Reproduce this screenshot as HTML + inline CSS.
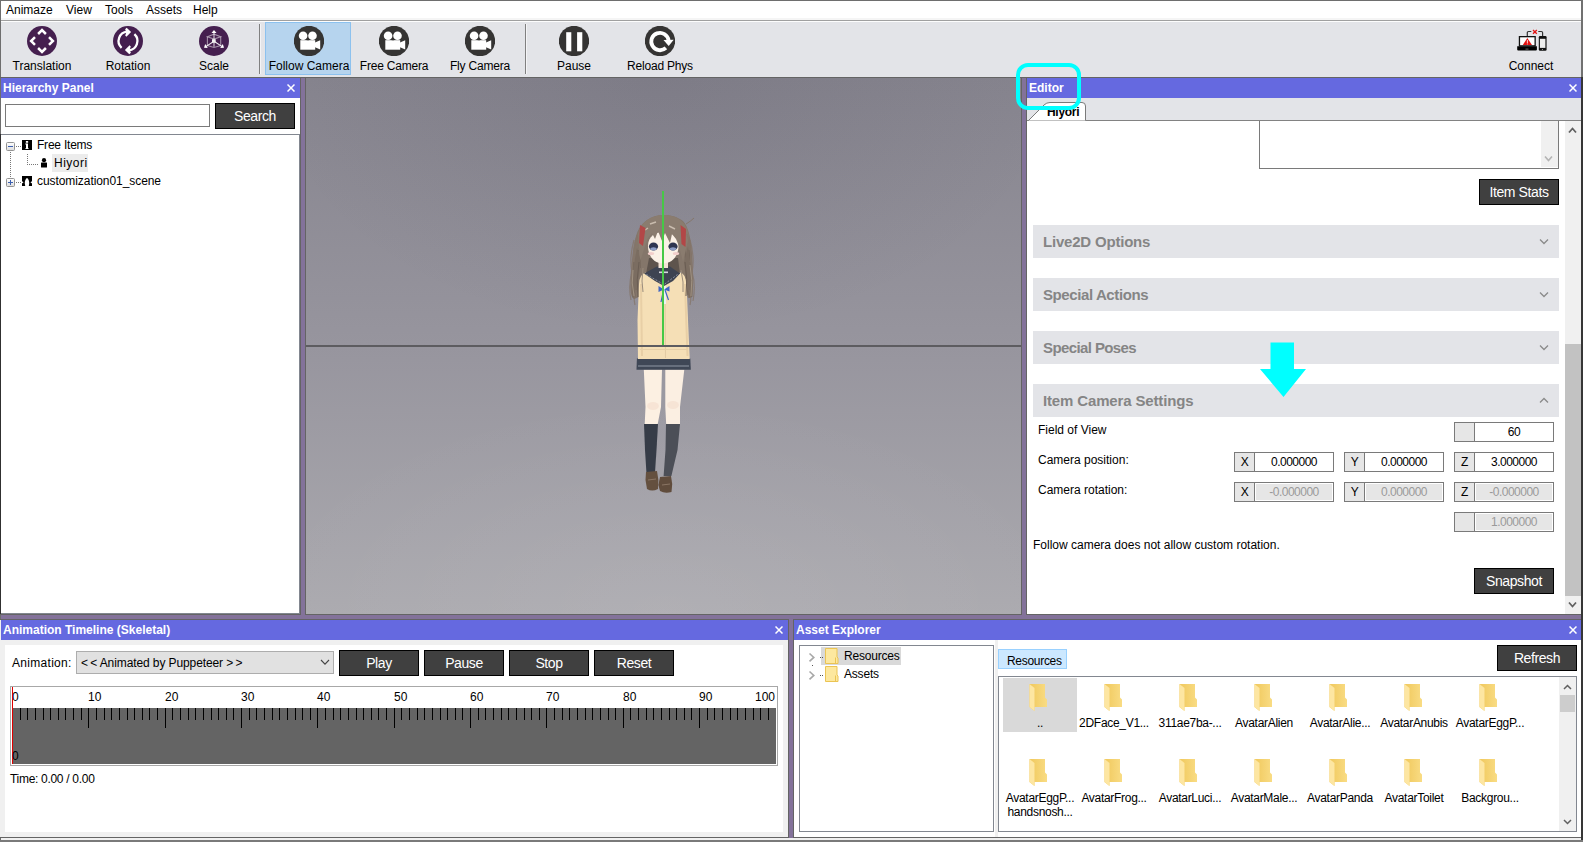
<!DOCTYPE html>
<html><head><meta charset="utf-8">
<style>
*{margin:0;padding:0;box-sizing:border-box}
html,body{width:1583px;height:842px;overflow:hidden;background:#f0f0f0;font-family:"Liberation Sans",sans-serif;font-size:12px;color:#000}
.a{position:absolute}
.t{position:absolute;white-space:nowrap;line-height:1}
.hdr{position:absolute;background:#6569e0;height:20px}
.hdr .ht{position:absolute;left:2px;top:4px;color:#fff;font-weight:bold;font-size:12px;line-height:12px;white-space:nowrap}
.hdr .x{position:absolute;top:6px;width:8px;height:8px}
.btn{position:absolute;background:#404040;border:1px solid #000;color:#fff;font-size:14px;letter-spacing:-0.4px;text-align:center;white-space:nowrap}
.tb{position:absolute;top:22px;height:53px;width:86px;text-align:center}
.tb svg{position:absolute;left:27px;top:3px}
.tb .l{position:absolute;left:0;right:0;top:39px;font-size:12px;line-height:14px;text-align:center;white-space:nowrap}
</style></head><body>
<svg width="0" height="0" style="position:absolute"><defs><linearGradient id="fg" x1="0" y1="0" x2="1" y2="0"><stop offset="0" stop-color="#f0c85e"/><stop offset="0.35" stop-color="#f3cf6a"/><stop offset="1" stop-color="#f9dc84"/></linearGradient></defs></svg>
<!-- window border -->
<div class="a" style="left:0;top:0;width:1583px;height:1px;background:#6e6e6e"></div>
<div class="a" style="left:0;top:0;width:1px;height:842px;background:#6e6e6e"></div>
<div class="a" style="left:1581px;top:0;width:2px;height:77px;background:#717171"></div><div class="a" style="left:1581px;top:77px;width:2px;height:765px;background:#363636"></div>
<!-- menu -->
<div class="a" style="left:1px;top:1px;width:1580px;height:17px;background:#fff"></div>
<div class="a" style="left:1px;top:18px;width:1580px;height:2px;background:#f5f5f5"></div>
<div class="a" style="left:1px;top:20px;width:1580px;height:1px;background:#a0a0a0"></div>
<div class="a" style="left:1px;top:21px;width:1580px;height:1px;background:#fdfdfd"></div>
<div class="t" style="left:6px;top:4px">Animaze</div>
<div class="t" style="left:66px;top:4px">View</div>
<div class="t" style="left:105px;top:4px">Tools</div>
<div class="t" style="left:146px;top:4px">Assets</div>
<div class="t" style="left:193px;top:4px">Help</div>
<!-- toolbar -->
<div class="a" style="left:1px;top:22px;width:1580px;height:55px;background:#e3e4e8"></div>
<div class="a" style="left:0;top:77px;width:1581px;height:1px;background:#646464"></div>


<!-- toolbar buttons -->
<div class="a" style="left:265px;top:22px;width:86px;height:53px;background:#b6d4ee;border:1px solid #8cc1ee"></div>
<div class="a" style="left:259px;top:24px;width:1px;height:50px;background:#808080"></div>
<div class="a" style="left:260px;top:24px;width:1px;height:50px;background:#f4f4f6"></div>
<div class="a" style="left:525px;top:24px;width:1px;height:50px;background:#808080"></div>
<div class="a" style="left:526px;top:24px;width:1px;height:50px;background:#f4f4f6"></div>

<svg class="a" style="left:27px;top:26px" width="30" height="30" viewBox="0 0 30 30"><circle cx="15" cy="15" r="15" fill="#451f4f"/><g fill="none" stroke="#fff" stroke-width="2.5" stroke-linejoin="miter"><polyline points="11.1,8 15,4.1 18.9,8"/><polyline points="11.1,22 15,25.9 18.9,22"/><polyline points="8,11.1 4.1,15 8,18.9"/><polyline points="22,11.1 25.9,15 22,18.9"/></g></svg>
<div class="t" style="left:0;width:84px;text-align:center;top:60px">Translation</div>

<svg class="a" style="left:113px;top:26px" width="30" height="30" viewBox="0 0 30 30"><circle cx="15" cy="15" r="15" fill="#451f4f"/><g fill="none" stroke="#fff" stroke-width="2.3"><path d="M8.6 21.8 A9.3 9.3 0 0 1 14.2 5.7"/><path d="M21.4 8.2 A9.3 9.3 0 0 1 15.8 24.3"/></g><g fill="#fff"><polygon points="12.1,3.3 13.7,1.7 18.1,6.1 13.4,10.8 12.2,9.6 13.4,6.2"/><polygon points="17.9,26.7 16.3,28.3 11.9,23.9 16.6,19.2 17.8,20.4 16.6,23.8"/></g></svg>
<div class="t" style="left:86px;width:84px;text-align:center;top:60px">Rotation</div>

<svg class="a" style="left:199px;top:26px" width="30" height="30" viewBox="0 0 30 30"><circle cx="15" cy="15" r="15" fill="#451f4f"/><g fill="none" stroke="#fff" stroke-opacity="0.5" stroke-width="1.1"><path d="M8.4 10.7 L15 8.2 L21.7 10.7 L15 13.1 Z"/><path d="M8.4 10.7 V19.6 L15 21.5 L21.7 19.6 V10.7"/></g><rect x="14.3" y="6.8" width="1.4" height="14" fill="#fff" fill-opacity="0.6"/><g stroke="#fff" stroke-width="1.1" stroke-opacity="0.9"><line x1="15" y1="15.3" x2="7.2" y2="20.4"/><line x1="15" y1="15.3" x2="22.8" y2="20.4"/></g><g fill="#fff"><polygon points="15,3.9 17.5,6.9 12.5,6.9"/><rect x="13" y="13.2" width="3.7" height="3.5" fill="#f0f0f0"/><polygon points="6.2,18 5,21.8 8.8,22"/><polygon points="23.8,18 25,21.8 21.2,22"/></g></svg>
<div class="t" style="left:171px;width:86px;text-align:center;top:60px">Scale</div>
<svg class="a" style="left:294px;top:26px" width="30" height="30" viewBox="0 0 30 30"><circle cx="15" cy="15" r="15.2" fill="#353433"/><g fill="#fff"><circle cx="9.1" cy="9.8" r="4.3"/><circle cx="18.5" cy="9.8" r="4.3"/><rect x="6.3" y="14.2" width="14.9" height="9.5"/><polygon points="21,16.6 26.2,14.2 26.2,23.6 21,21.3"/></g><polygon points="12.6,14.3 13.85,12.6 15.1,14.3" fill="#353433"/></svg>
<div class="t" style="left:259px;width:100px;text-align:center;top:60px">Follow Camera</div>
<svg class="a" style="left:379px;top:26px" width="30" height="30" viewBox="0 0 30 30"><circle cx="15" cy="15" r="15.2" fill="#353433"/><g fill="#fff"><circle cx="9.1" cy="9.8" r="4.3"/><circle cx="18.5" cy="9.8" r="4.3"/><rect x="6.3" y="14.2" width="14.9" height="9.5"/><polygon points="21,16.6 26.2,14.2 26.2,23.6 21,21.3"/></g><polygon points="12.6,14.3 13.85,12.6 15.1,14.3" fill="#353433"/></svg>
<div class="t" style="left:344px;width:100px;text-align:center;top:60px;letter-spacing:-0.2px">Free Camera</div>
<svg class="a" style="left:465px;top:26px" width="30" height="30" viewBox="0 0 30 30"><circle cx="15" cy="15" r="15.2" fill="#353433"/><g fill="#fff"><circle cx="9.1" cy="9.8" r="4.3"/><circle cx="18.5" cy="9.8" r="4.3"/><rect x="6.3" y="14.2" width="14.9" height="9.5"/><polygon points="21,16.6 26.2,14.2 26.2,23.6 21,21.3"/></g><polygon points="12.6,14.3 13.85,12.6 15.1,14.3" fill="#353433"/></svg>
<div class="t" style="left:430px;width:100px;text-align:center;top:60px;letter-spacing:-0.2px">Fly Camera</div>

<svg class="a" style="left:559px;top:26px" width="30" height="30" viewBox="0 0 30 30"><circle cx="15" cy="15" r="15.2" fill="#353433"/><g fill="#fff"><rect x="7.2" y="6.2" width="5.1" height="19.1"/><rect x="18.1" y="6.2" width="5.2" height="19.1"/></g></svg>
<div class="t" style="left:524px;width:100px;text-align:center;top:60px">Pause</div>
<svg class="a" style="left:645px;top:26px" width="30" height="30" viewBox="0 0 30 30"><circle cx="15" cy="15" r="15.2" fill="#353433"/><path d="M23.57 14.2 A8.7 8.7 0 1 0 20.9 21.9" fill="none" stroke="#fff" stroke-width="3.8"/><polygon points="18.5,13.9 28.7,13.7 23.7,20.1" fill="#fff"/></svg>
<div class="t" style="left:610px;width:100px;text-align:center;top:60px;letter-spacing:-0.2px">Reload Phys</div>

<svg class="a" style="left:1512px;top:26px" width="40" height="28" viewBox="0 0 40 28"><rect x="7.45" y="10.65" width="15.7" height="9.2" fill="#fff" stroke="#111" stroke-width="1.3"/><path d="M5.2 20.3 H24.9 V23.6 Q24.9 24.6 23.9 24.6 H6.2 Q5.2 24.6 5.2 23.6 Z" fill="#000"/><rect x="13.5" y="22.6" width="3" height="1" fill="#666"/><polygon points="15.3,12 10.8,19 20,19" fill="#e31212"/><rect x="14.9" y="14" width="0.8" height="3.2" fill="#fff"/><rect x="14.9" y="17.6" width="0.8" height="0.8" fill="#fff"/><rect x="26.8" y="10" width="7.8" height="14.8" rx="1.2" fill="#111"/><rect x="27.9" y="12.8" width="5.5" height="9.1" fill="#eee"/><circle cx="30.4" cy="23.5" r="0.5" fill="#ccc"/><path d="M15.3 10 V6.7 Q15.3 5.5 16.5 5.5 H19.3 M26.3 5.5 H29.4 Q30.6 5.5 30.6 6.7 V10" fill="none" stroke="#333" stroke-width="1.2"/><path d="M21 4 L24.8 7.8 M24.8 4 L21 7.8" stroke="#e31212" stroke-width="1.3"/></svg>
<div class="t" style="left:1481px;width:100px;text-align:center;top:60px">Connect</div>

<!-- splitter background -->
<div class="a" style="left:1px;top:78px;width:1580px;height:760px;background:#83729a"></div>

<!-- hierarchy panel -->
<div class="a" style="left:1px;top:78px;width:299px;height:536px;background:#fff"></div>
<div class="a" style="left:300px;top:77px;width:1px;height:538px;background:#646464"></div>
<div class="a" style="left:0;top:614px;width:301px;height:1px;background:#646464"></div>
<div class="hdr" style="left:1px;top:78px;width:299px"><div class="ht">Hierarchy Panel</div></div>


<!-- hierarchy content -->
<div class="a" style="left:5px;top:104px;width:205px;height:23px;border:1px solid #7a7a7a;background:#fff"></div>
<div class="btn" style="left:215px;top:103px;width:80px;height:26px;line-height:24px">Search</div>
<div class="a" style="left:1px;top:134px;width:299px;height:1px;background:#828790"></div>
<div class="a" style="left:299px;top:134px;width:1px;height:480px;background:#828790"></div>
<div class="a" style="left:0;top:134px;width:1px;height:480px;background:#303030"></div>
<div class="a" style="left:1px;top:613px;width:299px;height:1px;background:#828790"></div>
<svg class="a" style="left:0;top:135px" width="60" height="55" viewBox="0 135 60 55">
 <defs><linearGradient id="eg" x1="0" y1="0" x2="0" y2="1"><stop offset="0" stop-color="#fff"/><stop offset="1" stop-color="#dcdcdc"/></linearGradient></defs>
 <rect x="6.5" y="142.5" width="8" height="8" rx="1" fill="url(#eg)" stroke="#939393"/>
 <rect x="8" y="146" width="5" height="1" fill="#3b5fb0"/>
 <rect x="6.5" y="178.5" width="8" height="8" rx="1" fill="url(#eg)" stroke="#939393"/>
 <rect x="8" y="182" width="5" height="1" fill="#3b5fb0"/><rect x="10" y="180" width="1" height="5" fill="#3b5fb0"/>
 <g fill="#777">
  <rect x="16" y="146" width="1" height="1"/><rect x="18" y="146" width="1" height="1"/><rect x="20" y="146" width="1" height="1"/>
  <rect x="16" y="182" width="1" height="1"/><rect x="18" y="182" width="1" height="1"/><rect x="20" y="182" width="1" height="1"/>
  <rect x="10" y="152" width="1" height="1"/><rect x="10" y="154" width="1" height="1"/><rect x="10" y="156" width="1" height="1"/><rect x="10" y="158" width="1" height="1"/><rect x="10" y="160" width="1" height="1"/><rect x="10" y="162" width="1" height="1"/><rect x="10" y="164" width="1" height="1"/><rect x="10" y="166" width="1" height="1"/><rect x="10" y="168" width="1" height="1"/><rect x="10" y="170" width="1" height="1"/><rect x="10" y="172" width="1" height="1"/><rect x="10" y="174" width="1" height="1"/><rect x="10" y="176" width="1" height="1"/>
  <rect x="27" y="154" width="1" height="1"/><rect x="27" y="156" width="1" height="1"/><rect x="27" y="158" width="1" height="1"/><rect x="27" y="160" width="1" height="1"/><rect x="27" y="162" width="1" height="1"/><rect x="27" y="164" width="1" height="1"/>
  <rect x="29" y="164" width="1" height="1"/><rect x="31" y="164" width="1" height="1"/><rect x="33" y="164" width="1" height="1"/><rect x="35" y="164" width="1" height="1"/><rect x="37" y="164" width="1" height="1"/>
 </g>
 <rect x="22" y="140" width="10" height="10" fill="#000"/>
 <rect x="25.8" y="141" width="2.4" height="1.8" rx="0.6" fill="#fff"/><rect x="26" y="143.5" width="2" height="5" fill="#fff"/><rect x="25.3" y="143.5" width="1" height="1" fill="#fff"/><rect x="25.5" y="148" width="3" height="1" fill="#fff"/>
 <circle cx="44" cy="160.2" r="2.1" fill="#000"/><rect x="41" y="162.6" width="6" height="5" rx="0.5" fill="#000"/>
 <rect x="22" y="176" width="10" height="10" fill="#000"/>
 <path d="M25.2 186 Q24.3 183 25 181 Q26 178.2 27 178 Q28 178.2 29 181 Q29.7 183 28.8 186 Z" fill="#fff"/><path d="M22 181.2 L23.6 182.2 L22 183.4 Z M32 181.2 L30.4 182.2 L32 183.4 Z" fill="#fff"/>
</svg>
<div class="t" style="left:37px;top:139px;letter-spacing:-0.22px">Free Items</div>
<div class="a" style="left:52px;top:154px;width:36px;height:18px;background:#ececec"></div>
<div class="t" style="left:54px;top:157px;letter-spacing:0.5px">Hiyori</div>
<div class="t" style="left:37px;top:175px;letter-spacing:-0.07px">customization01_scene</div>
<svg class="a" style="left:287px;top:84px" width="8" height="8" viewBox="0 0 8 8"><path d="M0.5 0.5 L7.5 7.5 M7.5 0.5 L0.5 7.5" stroke="#fff" stroke-width="1.5"/></svg>

<!-- viewport -->
<div class="a" style="left:305px;top:77px;width:717px;height:538px;border:1px solid #646464;background:radial-gradient(ellipse 400px 260px at 50% 0%,rgba(40,40,60,0.09),rgba(40,40,60,0) 100%),radial-gradient(ellipse 420px 220px at 50% 100%,rgba(255,250,255,0.07),rgba(255,255,255,0) 100%),linear-gradient(#86848e,#97959e 50%,#abaaaf)"></div>


<!-- viewport content -->
<svg class="a" style="left:600px;top:180px" width="120" height="320" viewBox="600 180 120 320">
 <path d="M664 215 C651 215 640 222 636 236 C633 248 631 264 630.5 282 C630 291 631 297 634 299 L639 297 L643 282 L646 272 L681 272 L684 282 L688 298 L692.5 297 C693.5 285 693 268 692 254 C691 238 688 226 683 221 C677 216.5 670 215 664 215 Z" fill="#84766a"/>
 <path d="M634 262 L633 292 M638 250 L636 290 M689 250 L691 292 M686 260 L688 295 M641 236 L640 268 M684 236 L686 268" stroke="#6f6257" stroke-width="1"/>
 <path d="M643.8 369.5 L662 369.5 L661 407 L657.6 424.5 L644.7 424.5 L645.5 407 Z" fill="#fcf0e2"/>
 <path d="M665.3 369.5 L684.3 369.5 L680 407 L680 424.5 L666.2 424.5 L665.3 407 Z" fill="#fbefe2"/>
 <ellipse cx="653" cy="406" rx="6" ry="4" fill="#f4dccd" fill-opacity="0.6"/><ellipse cx="673" cy="405" rx="6" ry="4" fill="#f4dccd" fill-opacity="0.6"/>
 <path d="M644 424 L658 424 L656.5 450 L655 472.5 L646.4 472.5 L645 450 Z" fill="#363c47"/>
 <path d="M666 424 L680 424 L677.5 450 L671.4 476 L663.6 476 L665.5 450 Z" fill="#4c4f57"/>
 <path d="M646 472 L657 471 L658.4 480 L658 489 Q652 492 647 489 L645.5 480 Z" fill="#64503f"/>
 <path d="M660 477 L671 476 L672.2 484 L671.5 492 Q665 494 660 491 L658.4 485 Z" fill="#604c3c"/>
 <path d="M648 480 L656 479 M662 485 L670 484" stroke="#8a7564" stroke-width="1"/>
 <path d="M636.9 358.5 L690.3 358.5 L690.8 369.7 L636.5 369.7 Z" fill="#3f4756"/>
 <rect x="638" y="365.5" width="51" height="1" fill="#9097a3"/>
 <path d="M646 272.5 Q639.5 274 639 284 L637.5 320 L638 359 L689.7 359 L688 320 L686.5 284 Q686 274 680 272.5 Z" fill="#f5dfb6"/>
 <path d="M641 284 L642 356 M685 284 L687.5 356" stroke="#e8cfa6" stroke-width="2"/>
 <path d="M665 290 L665.5 358" stroke="#e3cba3" stroke-width="1"/>
 <rect x="640" y="349" width="48" height="1" fill="#e6cfa8"/>
 <path d="M649 258 L678 258 L680 274 L646 274 Z" fill="#5e544d"/><path d="M644 273.5 L657 266.5 L670 266.5 L680 273.5 L673 281 L664 286 L655 281 Z" fill="#3e4452"/><rect x="659" y="271.5" width="9" height="1.6" fill="#d5d8de"/><rect x="662.5" y="286" width="3.5" height="18" fill="#eef0f4"/>
 <path d="M646.5 274.5 L664 284.5 L677.5 274.5" fill="none" stroke="#8b92a2" stroke-width="1" stroke-dasharray="2 1.5"/>
 <rect x="658.5" y="260" width="9.5" height="8" fill="#f4e3d6"/>
 <path d="M648 246 C648 236 656 232 663 232 C671 232 678.5 236 678.5 246 C678.5 256 672 263.5 663 263.5 C654 263.5 648 256 648 246 Z" fill="#fbf1e6"/>
 <path d="M664 215 C652 215 641 221 638 234 L640 262 L645 246 L648 238 L652 233 L655 239 L658 231 L662 241 L665 233 L670 243 L672 234 L676 239 L679 246 L683 262 L689 236 C687 221 676 215 664 215 Z" fill="#8a7c6f"/>
 <path d="M650 224 L656 222 M669 226 L675 229 M645 230 L648 228" stroke="#c9bcae" stroke-width="1.5"/>
 <ellipse cx="653.5" cy="246.5" rx="4.6" ry="4" fill="#2e3550"/>
 <ellipse cx="673" cy="246.5" rx="4.6" ry="4" fill="#2e3550"/>
 <ellipse cx="653.5" cy="248.8" rx="3.2" ry="1.6" fill="#8c9cc4"/><ellipse cx="673" cy="248.8" rx="3.2" ry="1.6" fill="#8c9cc4"/>
 <ellipse cx="651" cy="253.5" rx="3.2" ry="1.5" fill="#f3cfcb"/><ellipse cx="676" cy="253.5" rx="3.2" ry="1.5" fill="#f3cfcb"/>
 <path d="M640 225 L645.5 228 L643 246 L639 243 Z" fill="#b24747"/>
 <path d="M680.5 225 L686 229 L685.5 247 L681.5 244 Z" fill="#b24747"/>
 <path d="M637 248 C634 262 631 280 632 297 L635 299 L638 282 L641 262 Z" fill="#7b6d61"/>
 <path d="M688 246 C690 262 693 282 692 297 L689 298 L686 282 L684 262 Z" fill="#7b6d61"/>
 <path d="M686 224 Q691 221 694 218" fill="none" stroke="#85776b" stroke-width="1"/><g fill="none" stroke="#84766a" stroke-width="1.2" stroke-opacity="0.8"><path d="M634 240 Q629 258 632 272 Q628 285 631 300"/><path d="M637 236 Q632 250 634 262"/><path d="M690 240 Q695 258 692 272 Q696 285 693 301"/><path d="M687 234 Q692 248 690 262"/><path d="M636 290 Q633 298 635 305"/><path d="M689 290 Q692 298 690 305"/></g><g fill="none" stroke-width="1"><path d="M633 270 Q631 283 634 296" stroke="#a09282"/><path d="M639 262 Q636 280 638 297" stroke="#6a5d53"/><path d="M643 268 Q641 282 643 292" stroke="#9a8c7c"/><path d="M690 265 Q693 280 691 296" stroke="#a09282"/><path d="M685 262 Q688 280 686 296" stroke="#6a5d53"/><path d="M681 270 Q684 283 683 292" stroke="#9a8c7c"/></g>
 <path d="M658.5 286 L664 289.5 L669.5 286 L669.5 291.5 L664 289.5 L658.5 292 Z" fill="#3d64c4"/>
 <path d="M663.5 290 L661 302 M665 290 L668.5 300" stroke="#3d64c4" stroke-width="1.2"/>
</svg>
<div class="a" style="left:306px;top:345px;width:715px;height:2px;background:#5d5c60"></div>
<div class="a" style="left:662px;top:191px;width:2px;height:154px;background:#46c846"></div>

<!-- editor -->
<div class="a" style="left:1026px;top:77px;width:555px;height:538px;border-left:1px solid #646464;border-top:1px solid #646464;border-bottom:1px solid #646464;background:#fff"></div>
<div class="hdr" style="left:1027px;top:78px;width:554px"><div class="ht">Editor</div></div>


<!-- editor content -->
<div class="a" style="left:1027px;top:98px;width:554px;height:22px;background:#e3e4e8"></div>
<div class="a" style="left:1027px;top:120px;width:554px;height:1px;background:#828282"></div>
<svg class="a" style="left:1027px;top:100px" width="62" height="22" viewBox="1027 100 62 22"><path d="M1028.5 120.5 L1044 105 Q1046.5 102.5 1050 102.5 L1082 102.5 Q1085.5 102.5 1085.5 106 L1085.5 120.5" fill="#fff" stroke="#7a7a7a" stroke-width="1"/></svg>
<div class="t" style="left:1047px;top:106px;font-weight:bold;letter-spacing:-0.3px">Hiyori</div>
<svg class="a" style="left:1569px;top:84px" width="8" height="8" viewBox="0 0 8 8"><path d="M0.5 0.5 L7.5 7.5 M7.5 0.5 L0.5 7.5" stroke="#fff" stroke-width="1.5"/></svg>

<div class="a" style="left:1259px;top:121px;width:300px;height:48px;border:1px solid #7a7a7a;border-top:none;background:#fff"></div>
<div class="a" style="left:1541px;top:121px;width:17px;height:46px;background:#f0f0f0"></div>
<svg class="a" style="left:1544px;top:155px" width="9" height="8" viewBox="0 0 9 8"><polyline points="1,1.5 4.5,5.5 8,1.5" fill="none" stroke="#b4b4b4" stroke-width="1.6"/></svg>
<div class="btn" style="left:1479px;top:179px;width:80px;height:26px;line-height:24px">Item Stats</div>

<!-- scrollbar -->
<div class="a" style="left:1565px;top:121px;width:16px;height:493px;background:#f0f0f0"></div>
<div class="a" style="left:1565px;top:344px;width:16px;height:252px;background:#c2c2c2"></div>
<svg class="a" style="left:1568px;top:126px" width="9" height="8" viewBox="0 0 9 8"><polyline points="1,6.5 4.5,2.5 8,6.5" fill="none" stroke="#606060" stroke-width="1.8"/></svg>
<svg class="a" style="left:1568px;top:601px" width="9" height="8" viewBox="0 0 9 8"><polyline points="1,1.5 4.5,5.5 8,1.5" fill="none" stroke="#606060" stroke-width="1.8"/></svg>
<div class="a" style="left:1033px;top:225px;width:526px;height:33px;background:#e3e4e8"></div>
<div class="t" style="left:1043px;top:234px;font-size:15px;font-weight:bold;color:#858585;letter-spacing:-0.2px">Live2D Options</div>
<svg class="a" style="left:1539px;top:238px" width="10" height="7" viewBox="0 0 10 7"><polyline points="1,1.5 5,5.5 9,1.5" fill="none" stroke="#8a8a8a" stroke-width="1.3"/></svg>
<div class="a" style="left:1033px;top:278px;width:526px;height:33px;background:#e3e4e8"></div>
<div class="t" style="left:1043px;top:287px;font-size:15px;font-weight:bold;color:#858585;letter-spacing:-0.4px">Special Actions</div>
<svg class="a" style="left:1539px;top:291px" width="10" height="7" viewBox="0 0 10 7"><polyline points="1,1.5 5,5.5 9,1.5" fill="none" stroke="#8a8a8a" stroke-width="1.3"/></svg>
<div class="a" style="left:1033px;top:331px;width:526px;height:33px;background:#e3e4e8"></div>
<div class="t" style="left:1043px;top:340px;font-size:15px;font-weight:bold;color:#858585;letter-spacing:-0.6px">Special Poses</div>
<svg class="a" style="left:1539px;top:344px" width="10" height="7" viewBox="0 0 10 7"><polyline points="1,1.5 5,5.5 9,1.5" fill="none" stroke="#8a8a8a" stroke-width="1.3"/></svg>
<div class="a" style="left:1033px;top:384px;width:526px;height:33px;background:#e3e4e8"></div>
<div class="t" style="left:1043px;top:393px;font-size:15px;font-weight:bold;color:#858585;letter-spacing:-0.15px">Item Camera Settings</div>
<svg class="a" style="left:1539px;top:397px" width="10" height="7" viewBox="0 0 10 7"><polyline points="1,5.5 5,1.5 9,5.5" fill="none" stroke="#8a8a8a" stroke-width="1.3"/></svg>

<div class="t" style="left:1038px;top:424px">Field of View</div>
<div class="t" style="left:1038px;top:454px">Camera position:</div>
<div class="t" style="left:1038px;top:484px">Camera rotation:</div>
<div class="t" style="left:1033px;top:539px">Follow camera does not allow custom rotation.</div>
<div class="a" style="left:1454px;top:422px;width:21px;height:20px;border:1px solid #7a7a7a;background:#e6e6e6;text-align:center;line-height:18px;font-size:12px;letter-spacing:-0.5px"></div>
<div class="a" style="left:1474px;top:422px;width:80px;height:20px;border:1px solid #7a7a7a;background:#fff;text-align:center;line-height:18px;font-size:12px;letter-spacing:-0.5px">60</div>
<div class="a" style="left:1234px;top:452px;width:21px;height:20px;border:1px solid #7a7a7a;background:#e6e6e6;text-align:center;line-height:18px;font-size:12px;letter-spacing:-0.5px">X</div>
<div class="a" style="left:1254px;top:452px;width:80px;height:20px;border:1px solid #7a7a7a;background:#fff;text-align:center;line-height:18px;font-size:12px;letter-spacing:-0.5px">0.000000</div>
<div class="a" style="left:1344px;top:452px;width:21px;height:20px;border:1px solid #7a7a7a;background:#e6e6e6;text-align:center;line-height:18px;font-size:12px;letter-spacing:-0.5px">Y</div>
<div class="a" style="left:1364px;top:452px;width:80px;height:20px;border:1px solid #7a7a7a;background:#fff;text-align:center;line-height:18px;font-size:12px;letter-spacing:-0.5px">0.000000</div>
<div class="a" style="left:1454px;top:452px;width:21px;height:20px;border:1px solid #7a7a7a;background:#e6e6e6;text-align:center;line-height:18px;font-size:12px;letter-spacing:-0.5px">Z</div>
<div class="a" style="left:1474px;top:452px;width:80px;height:20px;border:1px solid #7a7a7a;background:#fff;text-align:center;line-height:18px;font-size:12px;letter-spacing:-0.5px">3.000000</div>
<div class="a" style="left:1234px;top:482px;width:21px;height:20px;border:1px solid #7a7a7a;background:#e6e6e6;text-align:center;line-height:18px;font-size:12px;letter-spacing:-0.5px">X</div>
<div class="a" style="left:1254px;top:482px;width:80px;height:20px;border:1px solid #7a7a7a;background:#e6e6e6;box-shadow:inset 0 0 0 1px #fff;text-align:center;line-height:18px;font-size:12px;letter-spacing:-0.5px;color:#9a9a9a">-0.000000</div>
<div class="a" style="left:1344px;top:482px;width:21px;height:20px;border:1px solid #7a7a7a;background:#e6e6e6;text-align:center;line-height:18px;font-size:12px;letter-spacing:-0.5px">Y</div>
<div class="a" style="left:1364px;top:482px;width:80px;height:20px;border:1px solid #7a7a7a;background:#e6e6e6;box-shadow:inset 0 0 0 1px #fff;text-align:center;line-height:18px;font-size:12px;letter-spacing:-0.5px;color:#9a9a9a">0.000000</div>
<div class="a" style="left:1454px;top:482px;width:21px;height:20px;border:1px solid #7a7a7a;background:#e6e6e6;text-align:center;line-height:18px;font-size:12px;letter-spacing:-0.5px">Z</div>
<div class="a" style="left:1474px;top:482px;width:80px;height:20px;border:1px solid #7a7a7a;background:#e6e6e6;box-shadow:inset 0 0 0 1px #fff;text-align:center;line-height:18px;font-size:12px;letter-spacing:-0.5px;color:#9a9a9a">-0.000000</div>
<div class="a" style="left:1454px;top:512px;width:21px;height:20px;border:1px solid #7a7a7a;background:#e6e6e6;text-align:center;line-height:18px;font-size:12px;letter-spacing:-0.5px"></div>
<div class="a" style="left:1474px;top:512px;width:80px;height:20px;border:1px solid #7a7a7a;background:#e6e6e6;box-shadow:inset 0 0 0 1px #fff;text-align:center;line-height:18px;font-size:12px;letter-spacing:-0.5px;color:#9a9a9a">1.000000</div>
<div class="btn" style="left:1474px;top:568px;width:80px;height:26px;line-height:24px">Snapshot</div>

<!-- bottom panels -->
<div class="a" style="left:0;top:619px;width:789px;height:219px;border:1px solid #646464;border-left:none;background:#f0f0f0"></div>
<div class="hdr" style="left:1px;top:620px;width:787px"><div class="ht">Animation Timeline (Skeletal)</div></div>
<div class="a" style="left:793px;top:619px;width:788px;height:219px;border:1px solid #646464;border-right:none;background:#fff"></div>
<div class="hdr" style="left:794px;top:620px;width:787px"><div class="ht">Asset Explorer</div></div>

<div class="a" style="left:1px;top:838px;width:1580px;height:2px;background:#f0f0f0"></div>
<div class="a" style="left:0;top:840px;width:1583px;height:2px;background:#7a7a7a"></div>


<!-- animation timeline content -->
<div class="a" style="left:5px;top:645px;width:778px;height:187px;background:#fff"></div>
<svg class="a" style="left:775px;top:626px" width="8" height="8" viewBox="0 0 8 8"><path d="M0.5 0.5 L7.5 7.5 M7.5 0.5 L0.5 7.5" stroke="#fff" stroke-width="1.5"/></svg>
<div class="t" style="left:12px;top:657px;letter-spacing:0.3px">Animation:</div>
<div class="a" style="left:76px;top:651px;width:258px;height:23px;border:1px solid #adadad;background:#e1e1e1"></div>
<div class="t" style="left:81px;top:657px;letter-spacing:-0.1px">&lt;&#8201;&lt; Animated by Puppeteer &gt;&#8201;&gt;</div>
<svg class="a" style="left:320px;top:659px" width="10" height="7" viewBox="0 0 10 7"><polyline points="1,1 5,5.2 9,1" fill="none" stroke="#444" stroke-width="1.1"/></svg>
<div class="btn" style="left:339px;top:650px;width:80px;height:26px;line-height:24px">Play</div>
<div class="btn" style="left:424px;top:650px;width:80px;height:26px;line-height:24px">Pause</div>
<div class="btn" style="left:509px;top:650px;width:80px;height:26px;line-height:24px">Stop</div>
<div class="btn" style="left:594px;top:650px;width:80px;height:26px;line-height:24px">Reset</div>
<div class="a" style="left:10px;top:686px;width:768px;height:80px;border:1px solid #a8a8a8;background:#fff"></div>
<div class="a" style="left:12px;top:708px;width:764px;height:56px;background:#646464"></div>
<svg class="a" style="left:0;top:700px" width="790" height="40" viewBox="0 700 790 40"><g fill="#000"><rect x="20" y="708" width="1" height="12"/><rect x="27" y="708" width="1" height="12"/><rect x="35" y="708" width="1" height="12"/><rect x="43" y="708" width="1" height="12"/><rect x="50" y="708" width="1" height="12"/><rect x="58" y="708" width="1" height="12"/><rect x="65" y="708" width="1" height="12"/><rect x="73" y="708" width="1" height="12"/><rect x="81" y="708" width="1" height="12"/><rect x="88" y="708" width="1" height="20"/><rect x="96" y="708" width="1" height="12"/><rect x="104" y="708" width="1" height="12"/><rect x="111" y="708" width="1" height="12"/><rect x="119" y="708" width="1" height="12"/><rect x="127" y="708" width="1" height="12"/><rect x="134" y="708" width="1" height="12"/><rect x="142" y="708" width="1" height="12"/><rect x="149" y="708" width="1" height="12"/><rect x="157" y="708" width="1" height="12"/><rect x="165" y="708" width="1" height="20"/><rect x="172" y="708" width="1" height="12"/><rect x="180" y="708" width="1" height="12"/><rect x="188" y="708" width="1" height="12"/><rect x="195" y="708" width="1" height="12"/><rect x="203" y="708" width="1" height="12"/><rect x="211" y="708" width="1" height="12"/><rect x="218" y="708" width="1" height="12"/><rect x="226" y="708" width="1" height="12"/><rect x="233" y="708" width="1" height="12"/><rect x="241" y="708" width="1" height="20"/><rect x="249" y="708" width="1" height="12"/><rect x="256" y="708" width="1" height="12"/><rect x="264" y="708" width="1" height="12"/><rect x="272" y="708" width="1" height="12"/><rect x="279" y="708" width="1" height="12"/><rect x="287" y="708" width="1" height="12"/><rect x="295" y="708" width="1" height="12"/><rect x="302" y="708" width="1" height="12"/><rect x="310" y="708" width="1" height="12"/><rect x="317" y="708" width="1" height="20"/><rect x="325" y="708" width="1" height="12"/><rect x="333" y="708" width="1" height="12"/><rect x="340" y="708" width="1" height="12"/><rect x="348" y="708" width="1" height="12"/><rect x="356" y="708" width="1" height="12"/><rect x="363" y="708" width="1" height="12"/><rect x="371" y="708" width="1" height="12"/><rect x="378" y="708" width="1" height="12"/><rect x="386" y="708" width="1" height="12"/><rect x="394" y="708" width="1" height="20"/><rect x="401" y="708" width="1" height="12"/><rect x="409" y="708" width="1" height="12"/><rect x="417" y="708" width="1" height="12"/><rect x="424" y="708" width="1" height="12"/><rect x="432" y="708" width="1" height="12"/><rect x="440" y="708" width="1" height="12"/><rect x="447" y="708" width="1" height="12"/><rect x="455" y="708" width="1" height="12"/><rect x="462" y="708" width="1" height="12"/><rect x="470" y="708" width="1" height="20"/><rect x="478" y="708" width="1" height="12"/><rect x="485" y="708" width="1" height="12"/><rect x="493" y="708" width="1" height="12"/><rect x="501" y="708" width="1" height="12"/><rect x="508" y="708" width="1" height="12"/><rect x="516" y="708" width="1" height="12"/><rect x="524" y="708" width="1" height="12"/><rect x="531" y="708" width="1" height="12"/><rect x="539" y="708" width="1" height="12"/><rect x="546" y="708" width="1" height="20"/><rect x="554" y="708" width="1" height="12"/><rect x="562" y="708" width="1" height="12"/><rect x="569" y="708" width="1" height="12"/><rect x="577" y="708" width="1" height="12"/><rect x="585" y="708" width="1" height="12"/><rect x="592" y="708" width="1" height="12"/><rect x="600" y="708" width="1" height="12"/><rect x="608" y="708" width="1" height="12"/><rect x="615" y="708" width="1" height="12"/><rect x="623" y="708" width="1" height="20"/><rect x="630" y="708" width="1" height="12"/><rect x="638" y="708" width="1" height="12"/><rect x="646" y="708" width="1" height="12"/><rect x="653" y="708" width="1" height="12"/><rect x="661" y="708" width="1" height="12"/><rect x="669" y="708" width="1" height="12"/><rect x="676" y="708" width="1" height="12"/><rect x="684" y="708" width="1" height="12"/><rect x="691" y="708" width="1" height="12"/><rect x="699" y="708" width="1" height="20"/><rect x="707" y="708" width="1" height="12"/><rect x="714" y="708" width="1" height="12"/><rect x="722" y="708" width="1" height="12"/><rect x="730" y="708" width="1" height="12"/><rect x="737" y="708" width="1" height="12"/><rect x="745" y="708" width="1" height="12"/><rect x="753" y="708" width="1" height="12"/><rect x="760" y="708" width="1" height="12"/><rect x="768" y="708" width="1" height="12"/></g></svg>
<div class="t" style="left:12px;top:691px">0</div>
<div class="t" style="left:88px;top:691px">10</div>
<div class="t" style="left:165px;top:691px">20</div>
<div class="t" style="left:241px;top:691px">30</div>
<div class="t" style="left:317px;top:691px">40</div>
<div class="t" style="left:394px;top:691px">50</div>
<div class="t" style="left:470px;top:691px">60</div>
<div class="t" style="left:546px;top:691px">70</div>
<div class="t" style="left:623px;top:691px">80</div>
<div class="t" style="left:699px;top:691px">90</div>
<div class="t" style="left:755px;top:691px">100</div>
<div class="a" style="left:12px;top:687px;width:1px;height:77px;background:#e00000"></div>
<div class="t" style="left:12px;top:750px">0</div>
<div class="t" style="left:10px;top:773px;letter-spacing:-0.3px">Time: 0.00 / 0.00</div>

<!-- asset explorer content -->
<svg class="a" style="left:1569px;top:626px" width="8" height="8" viewBox="0 0 8 8"><path d="M0.5 0.5 L7.5 7.5 M7.5 0.5 L0.5 7.5" stroke="#fff" stroke-width="1.5"/></svg>
<div class="a" style="left:799px;top:645px;width:195px;height:187px;border:1px solid #828790;background:#fff"></div>
<div class="a" style="left:995px;top:640px;width:3px;height:197px;background:#f0f0f0"></div>
<div class="a" style="left:821px;top:647px;width:80px;height:18px;background:#d9d9d9"></div>
<svg class="a" style="left:805px;top:645px" width="40" height="40" viewBox="805 645 40 40">
 <polyline points="809.5,653.5 813.8,657.4 809.5,661.3" fill="none" stroke="#a8a8a8" stroke-width="1.6"/>
 <polyline points="809.5,671.5 813.8,675.4 809.5,679.3" fill="none" stroke="#a8a8a8" stroke-width="1.6"/>
 <rect x="820" y="657" width="1" height="1" fill="#555"/><rect x="822" y="657" width="1" height="1" fill="#555"/>
 <rect x="820" y="675" width="1" height="1" fill="#555"/><rect x="822" y="675" width="1" height="1" fill="#555"/>
 <rect x="812" y="665" width="1" height="1" fill="#555"/>
 <path d="M825.5 648.5 H837 V657 L838 658 V663.5 H825.5 Z" fill="#fde89f" stroke="#ebc453" stroke-width="1"/>
 <path d="M835.5 657.5 V663.5" stroke="#ebc453" stroke-width="1"/>
 <path d="M825.5 666.5 H837 V675 L838 676 V681.5 H825.5 Z" fill="#fde89f" stroke="#ebc453" stroke-width="1"/>
 <path d="M835.5 675.5 V681.5" stroke="#ebc453" stroke-width="1"/>
</svg>
<div class="t" style="left:844px;top:650px;letter-spacing:-0.2px">Resources</div>
<div class="t" style="left:844px;top:668px;letter-spacing:-0.2px">Assets</div>
<div class="a" style="left:998px;top:649px;width:69px;height:20px;border:1px solid #99d1ff;background:#cce8ff"></div>
<div class="t" style="left:1007px;top:655px;letter-spacing:-0.3px">Resources</div>
<div class="btn" style="left:1497px;top:645px;width:80px;height:26px;line-height:24px">Refresh</div>
<div class="a" style="left:998px;top:676px;width:579px;height:156px;border:1px solid #828790;background:#fff"></div>
<div class="a" style="left:1559px;top:677px;width:17px;height:154px;background:#f0f0f0"></div>
<div class="a" style="left:1560px;top:695px;width:15px;height:17px;background:#cdcdcd"></div>
<svg class="a" style="left:1563px;top:683px" width="9" height="8" viewBox="0 0 9 8"><polyline points="1,6 4.5,2.5 8,6" fill="none" stroke="#606060" stroke-width="1.5"/></svg>
<svg class="a" style="left:1563px;top:818px" width="9" height="8" viewBox="0 0 9 8"><polyline points="1,2 4.5,5.5 8,2" fill="none" stroke="#606060" stroke-width="1.5"/></svg>
<div class="a" style="left:1003px;top:678px;width:74px;height:54px;background:#d9d9d9"></div>
<svg class="a" style="left:1029px;top:684px" width="20" height="28" viewBox="0 0 20 28"><defs></defs><path d="M0.5 0 H16 V13.5 L18 15.5 V23 H5.5 V27 L0.5 23 Z" fill="url(#fg)"/><path d="M0.5 0 L5.5 4 V27 L0.5 23 Z" fill="#fde6a2"/></svg>
<div class="t" style="left:1000px;width:80px;text-align:center;top:717px;letter-spacing:-0.3px">..</div>
<svg class="a" style="left:1104px;top:684px" width="20" height="28" viewBox="0 0 20 28"><defs></defs><path d="M0.5 0 H16 V13.5 L18 15.5 V23 H5.5 V27 L0.5 23 Z" fill="url(#fg)"/><path d="M0.5 0 L5.5 4 V27 L0.5 23 Z" fill="#fde6a2"/></svg>
<div class="t" style="left:1074px;width:80px;text-align:center;top:717px;letter-spacing:-0.3px">2DFace_V1...</div>
<svg class="a" style="left:1179px;top:684px" width="20" height="28" viewBox="0 0 20 28"><defs></defs><path d="M0.5 0 H16 V13.5 L18 15.5 V23 H5.5 V27 L0.5 23 Z" fill="url(#fg)"/><path d="M0.5 0 L5.5 4 V27 L0.5 23 Z" fill="#fde6a2"/></svg>
<div class="t" style="left:1150px;width:80px;text-align:center;top:717px;letter-spacing:-0.3px">311ae7ba-...</div>
<svg class="a" style="left:1254px;top:684px" width="20" height="28" viewBox="0 0 20 28"><defs></defs><path d="M0.5 0 H16 V13.5 L18 15.5 V23 H5.5 V27 L0.5 23 Z" fill="url(#fg)"/><path d="M0.5 0 L5.5 4 V27 L0.5 23 Z" fill="#fde6a2"/></svg>
<div class="t" style="left:1224px;width:80px;text-align:center;top:717px;letter-spacing:-0.3px">AvatarAlien</div>
<svg class="a" style="left:1329px;top:684px" width="20" height="28" viewBox="0 0 20 28"><defs></defs><path d="M0.5 0 H16 V13.5 L18 15.5 V23 H5.5 V27 L0.5 23 Z" fill="url(#fg)"/><path d="M0.5 0 L5.5 4 V27 L0.5 23 Z" fill="#fde6a2"/></svg>
<div class="t" style="left:1300px;width:80px;text-align:center;top:717px;letter-spacing:-0.3px">AvatarAlie...</div>
<svg class="a" style="left:1404px;top:684px" width="20" height="28" viewBox="0 0 20 28"><defs></defs><path d="M0.5 0 H16 V13.5 L18 15.5 V23 H5.5 V27 L0.5 23 Z" fill="url(#fg)"/><path d="M0.5 0 L5.5 4 V27 L0.5 23 Z" fill="#fde6a2"/></svg>
<div class="t" style="left:1374px;width:80px;text-align:center;top:717px;letter-spacing:-0.3px">AvatarAnubis</div>
<svg class="a" style="left:1479px;top:684px" width="20" height="28" viewBox="0 0 20 28"><defs></defs><path d="M0.5 0 H16 V13.5 L18 15.5 V23 H5.5 V27 L0.5 23 Z" fill="url(#fg)"/><path d="M0.5 0 L5.5 4 V27 L0.5 23 Z" fill="#fde6a2"/></svg>
<div class="t" style="left:1450px;width:80px;text-align:center;top:717px;letter-spacing:-0.3px">AvatarEggP...</div>
<svg class="a" style="left:1029px;top:759px" width="20" height="28" viewBox="0 0 20 28"><defs></defs><path d="M0.5 0 H16 V13.5 L18 15.5 V23 H5.5 V27 L0.5 23 Z" fill="url(#fg)"/><path d="M0.5 0 L5.5 4 V27 L0.5 23 Z" fill="#fde6a2"/></svg>
<div class="t" style="left:1000px;width:80px;text-align:center;top:792px;letter-spacing:-0.3px">AvatarEggP...</div>
<svg class="a" style="left:1104px;top:759px" width="20" height="28" viewBox="0 0 20 28"><defs></defs><path d="M0.5 0 H16 V13.5 L18 15.5 V23 H5.5 V27 L0.5 23 Z" fill="url(#fg)"/><path d="M0.5 0 L5.5 4 V27 L0.5 23 Z" fill="#fde6a2"/></svg>
<div class="t" style="left:1074px;width:80px;text-align:center;top:792px;letter-spacing:-0.3px">AvatarFrog...</div>
<svg class="a" style="left:1179px;top:759px" width="20" height="28" viewBox="0 0 20 28"><defs></defs><path d="M0.5 0 H16 V13.5 L18 15.5 V23 H5.5 V27 L0.5 23 Z" fill="url(#fg)"/><path d="M0.5 0 L5.5 4 V27 L0.5 23 Z" fill="#fde6a2"/></svg>
<div class="t" style="left:1150px;width:80px;text-align:center;top:792px;letter-spacing:-0.3px">AvatarLuci...</div>
<svg class="a" style="left:1254px;top:759px" width="20" height="28" viewBox="0 0 20 28"><defs></defs><path d="M0.5 0 H16 V13.5 L18 15.5 V23 H5.5 V27 L0.5 23 Z" fill="url(#fg)"/><path d="M0.5 0 L5.5 4 V27 L0.5 23 Z" fill="#fde6a2"/></svg>
<div class="t" style="left:1224px;width:80px;text-align:center;top:792px;letter-spacing:-0.3px">AvatarMale...</div>
<svg class="a" style="left:1329px;top:759px" width="20" height="28" viewBox="0 0 20 28"><defs></defs><path d="M0.5 0 H16 V13.5 L18 15.5 V23 H5.5 V27 L0.5 23 Z" fill="url(#fg)"/><path d="M0.5 0 L5.5 4 V27 L0.5 23 Z" fill="#fde6a2"/></svg>
<div class="t" style="left:1300px;width:80px;text-align:center;top:792px;letter-spacing:-0.3px">AvatarPanda</div>
<svg class="a" style="left:1404px;top:759px" width="20" height="28" viewBox="0 0 20 28"><defs></defs><path d="M0.5 0 H16 V13.5 L18 15.5 V23 H5.5 V27 L0.5 23 Z" fill="url(#fg)"/><path d="M0.5 0 L5.5 4 V27 L0.5 23 Z" fill="#fde6a2"/></svg>
<div class="t" style="left:1374px;width:80px;text-align:center;top:792px;letter-spacing:-0.3px">AvatarToilet</div>
<svg class="a" style="left:1479px;top:759px" width="20" height="28" viewBox="0 0 20 28"><defs></defs><path d="M0.5 0 H16 V13.5 L18 15.5 V23 H5.5 V27 L0.5 23 Z" fill="url(#fg)"/><path d="M0.5 0 L5.5 4 V27 L0.5 23 Z" fill="#fde6a2"/></svg>
<div class="t" style="left:1450px;width:80px;text-align:center;top:792px;letter-spacing:-0.3px">Backgrou...</div>
<div class="t" style="left:1000px;width:80px;text-align:center;top:806px;letter-spacing:-0.3px">handsnosh...</div>

<!-- annotations -->
<svg class="a" style="left:1010px;top:55px" width="80" height="60" viewBox="1010 55 80 60"><rect x="1018" y="65" width="61" height="43" rx="10" fill="none" stroke="#00ffff" stroke-width="4"/></svg>
<svg class="a" style="left:1255px;top:338px" width="56" height="64" viewBox="1255 338 56 64"><polygon points="1270.5,342.5 1294,342.5 1294,369 1306,369 1283.5,397 1260,369 1270.5,369" fill="#00ffff"/></svg>
</body></html>
